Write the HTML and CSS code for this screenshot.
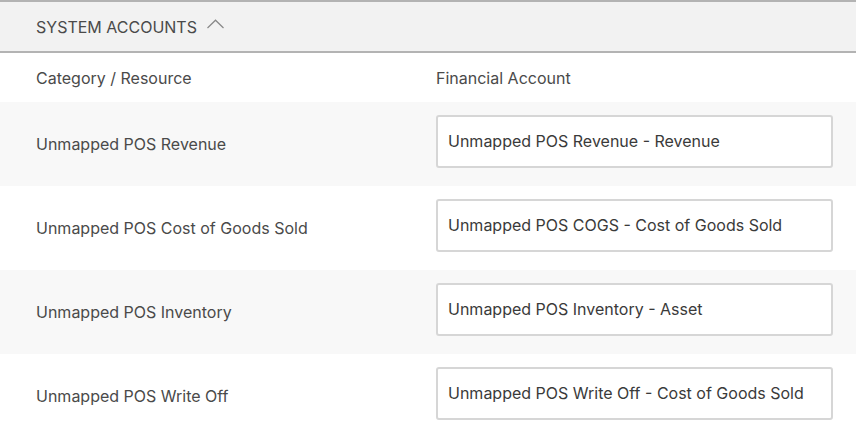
FILE: index.html
```html
<!DOCTYPE html>
<html lang="en">
<head>
  <meta charset="UTF-8">
  <title>System Accounts</title>
  <link rel="stylesheet" href="styles.css">
</head>
<body>
  <section class="panel">
    <div class="panel-header">
      <span class="panel-title">SYSTEM ACCOUNTS</span>
      <svg class="chevron" width="17" height="10" viewBox="0 0 17 10">
        <path d="M0.5 9 L8.5 1.2 L16.5 9" fill="none" stroke="#888" stroke-width="1.2"/>
      </svg>
    </div>

    <div class="row head">
      <div class="cell">Category / Resource</div>
      <div class="cell">Financial Account</div>
    </div>

    <div class="row shaded">
      <div class="cell">Unmapped POS Revenue</div>
      <div class="cell"><div class="field">Unmapped POS Revenue - Revenue</div></div>
    </div>
    <div class="row">
      <div class="cell">Unmapped POS Cost of Goods Sold</div>
      <div class="cell"><div class="field">Unmapped POS COGS - Cost of Goods Sold</div></div>
    </div>
    <div class="row shaded">
      <div class="cell">Unmapped POS Inventory</div>
      <div class="cell"><div class="field">Unmapped POS Inventory - Asset</div></div>
    </div>
    <div class="row">
      <div class="cell">Unmapped POS Write Off</div>
      <div class="cell"><div class="field">Unmapped POS Write Off - Cost of Goods Sold</div></div>
    </div>
  </section>
</body>
</html>
```
FILE: styles.css
```css
body {
  margin: 0;
  font-family: 'Inter', sans-serif;
  font-size: 16px;
  color: #4a4a4a;
  background: #ffffff;
}

.panel-header {
  display: flex;
  align-items: center;
  gap: 10px;
  height: 49px;
  padding-left: 36px;
  background-color: #f2f2f2;
  border-top: 2px solid #b3b3b3;
  border-bottom: 2px solid #b3b3b3;
}

.chevron {
  margin-top: -5px;
}

.row {
  display: grid;
  grid-template-columns: 400px 1fr;
  padding: 0 23px 0 36px;
  height: 84px;
  align-items: center;
}

.row.head {
  height: 49px;
}

.row.shaded {
  background-color: #f8f8f8;
}

.cell {
  display: flex;
  align-items: center;
}

.field {
  flex: 1;
  box-sizing: border-box;
  height: 53px;
  margin-top: -6px;
  padding: 0 10px;
  display: flex;
  align-items: center;
  background: #ffffff;
  border: 2px solid #d6d6d6;
  border-radius: 3px;
  color: #3a3a3a;
}
```
